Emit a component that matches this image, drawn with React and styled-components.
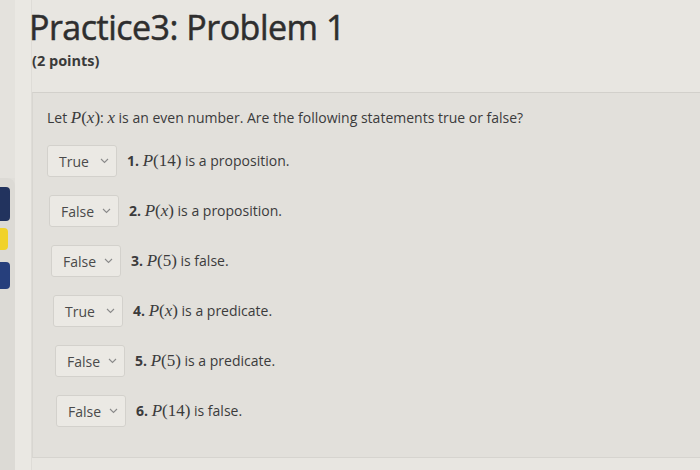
import React from "react";
import styled, { createGlobalStyle } from "styled-components";

const Global = createGlobalStyle`
  html, body { margin: 0; padding: 0; }
  body {
    width: 700px; height: 470px; overflow: hidden;
    background: #e8e6e1;
    font-family: "Open Sans", "Noto Sans", sans-serif;
    color: #3b3b3b;
  }
`;

const Page = styled.div`
  display: flex;
  height: 470px;
  width: 700px;
  overflow: hidden;
`;

const Sidebar = styled.div`
  width: 15px;
  flex: none;
  display: flex;
  flex-direction: column;
  background: #e1dfda;
`;

const SideTop = styled.div`
  height: 178px;
  background: #e4e2dd;
`;

const SideCard = styled.div`
  flex: 1;
  background: #dcdad5;
  border-top-right-radius: 8px;
  display: flex;
  flex-direction: column;
  gap: 7px;
  padding-top: 9px;
`;

const Block = styled.div`
  width: ${(p) => p.w}px;
  height: ${(p) => p.h}px;
  background: ${(p) => p.c};
  border-radius: 0 4px 4px 0;
  margin-top: ${(p) => p.mt || 0}px;
`;

const Gutter = styled.div`
  width: 16px;
  flex: none;
  background: #eae8e3;
  border-right: 1px solid #dedcd7;
`;

const Main = styled.div`
  flex: 1;
  display: flex;
  flex-direction: column;
  padding-top: 8px;
  min-width: 0;
`;

const Title = styled.h1`
  margin: 0 0 0 -3px;
  font-weight: 400;
  font-size: 34px;
  line-height: 38px;
  letter-spacing: -0.5px;
  color: #2e2e2e;
  -webkit-text-stroke: 0.5px #2e2e2e;
  white-space: nowrap;
`;

const Points = styled.div`
  font-weight: 700;
  font-size: 14.5px;
  line-height: 18px;
  margin-top: 6px;
  color: #3a3a3a;
`;

const Panel = styled.section`
  margin-top: 22px;
  margin-right: -20px;
  height: 366px;
  box-sizing: border-box;
  background: #e2e0db;
  border-top: 1px solid #d2d0cb;
  border-left: 1px solid #d8d6d1;
  border-bottom: 1px solid #d6d4cf;
  padding: 15px 0 0 14px;
  display: flex;
  flex-direction: column;
`;

const Prompt = styled.p`
  margin: 0;
  font-size: 14px;
  line-height: 20px;
  color: #3b3b3b;
  white-space: nowrap;
`;

const M = styled.span`
  font-family: "Liberation Serif", "DejaVu Serif", serif;
  font-style: ${(p) => (p.up ? "normal" : "italic")};
  font-size: 17px;
`;

const List = styled.div`
  display: flex;
  flex-direction: column;
  gap: 18px;
  margin-top: 17px;
`;

const Row = styled.div`
  display: flex;
  align-items: center;
  gap: 10px;
  margin-left: ${(p) => p.indent}px;
`;

const SelectBox = styled.div`
  width: 70px;
  height: 32px;
  box-sizing: border-box;
  border: 1px solid #d3d1cc;
  border-radius: 3px;
  background: #ebe9e4;
  display: flex;
  align-items: center;
  justify-content: space-between;
  padding: 0 7px 0 11px;
  font-size: 14px;
  color: #4a4a4a;
`;

const Chevron = styled.svg`
  width: 9px;
  height: 6px;
  flex: none;
`;

const Statement = styled.div`
  font-size: 14px;
  color: #3b3b3b;
  white-space: nowrap;
`;

const Num = styled.b`
  font-weight: 700;
`;

const Pexpr = ({ a }) => (
  <>
    <M>P</M>
    <M up>(</M>
    {a === "x" ? <M>x</M> : <M up>{a}</M>}
    <M up>)</M>
  </>
);

const items = [
  { v: "True", n: 1, a: "14", t: "is a proposition.", indent: 0 },
  { v: "False", n: 2, a: "x", t: "is a proposition.", indent: 2 },
  { v: "False", n: 3, a: "5", t: "is false.", indent: 4 },
  { v: "True", n: 4, a: "x", t: "is a predicate.", indent: 6 },
  { v: "False", n: 5, a: "5", t: "is a predicate.", indent: 8 },
  { v: "False", n: 6, a: "14", t: "is false.", indent: 9 },
];

export default function App() {
  return (
    <>
      <Global />
      <Page>
        <Sidebar>
          <SideTop />
          <SideCard>
            <Block w={10} h={34} c="#22335e" />
            <Block w={8} h={22} c="#f1d22a" />
            <Block w={10} h={27} c="#263f7c" mt={5} />
          </SideCard>
        </Sidebar>
        <Gutter />
        <Main>
          <Title>Practice3: Problem 1</Title>
          <Points>(2 points)</Points>
          <Panel>
            <Prompt>
              Let <Pexpr a="x" />: <M>x</M> is an even number. Are the following
              statements true or false?
            </Prompt>
            <List>
              {items.map((it) => (
                <Row key={it.n} indent={it.indent}>
                  <SelectBox>
                    <span>{it.v}</span>
                    <Chevron viewBox="0 0 9 6">
                      <path
                        d="M1 1l3.5 3.5L8 1"
                        fill="none"
                        stroke="#8a8a8a"
                        strokeWidth="1.1"
                      />
                    </Chevron>
                  </SelectBox>
                  <Statement>
                    <Num>{it.n}.</Num> <Pexpr a={it.a} /> {it.t}
                  </Statement>
                </Row>
              ))}
            </List>
          </Panel>
        </Main>
      </Page>
    </>
  );
}
